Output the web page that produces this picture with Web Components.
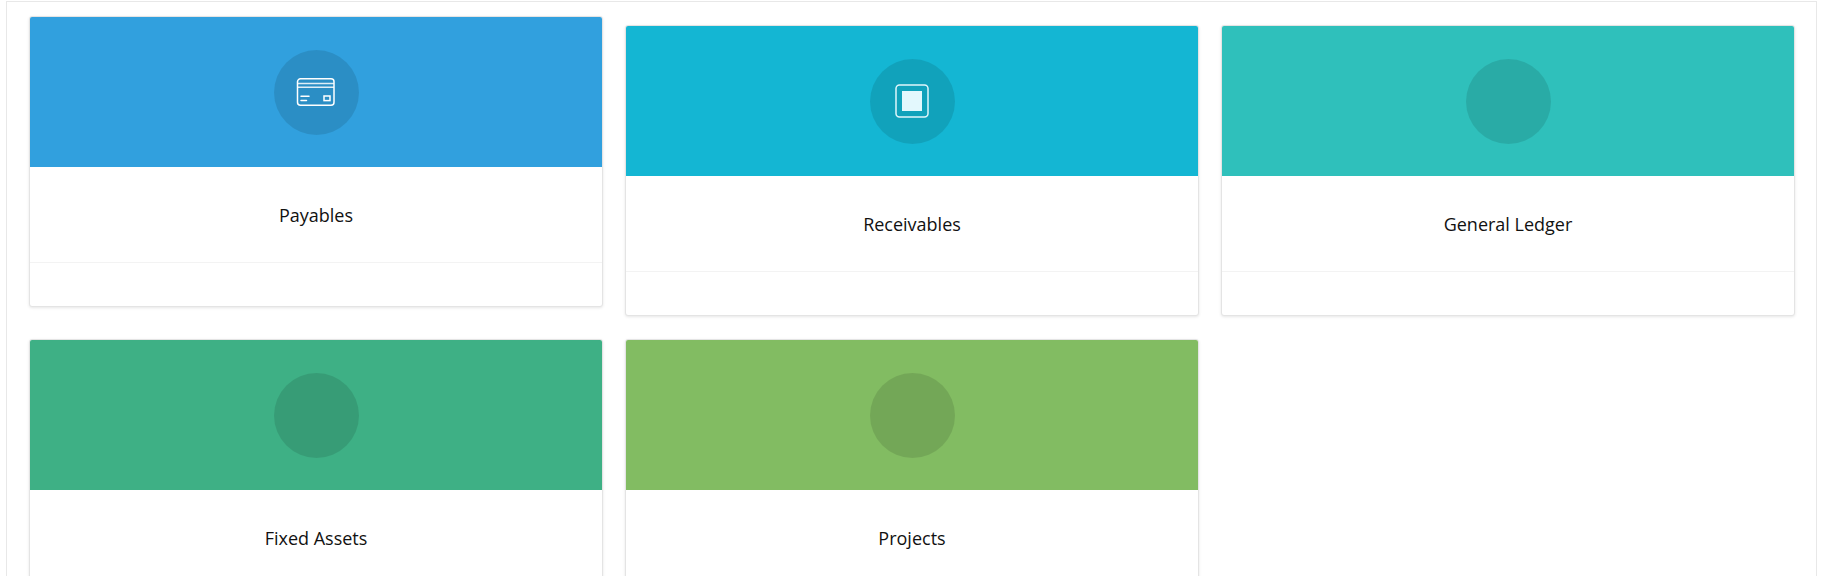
<!DOCTYPE html>
<html lang="en">
<head>
<meta charset="utf-8">
<title>Modules</title>
<style>
  html, body { margin: 0; height: 576px; overflow: hidden; background: #fff; }
</style>
</head>
<body>
<module-panel>
  <module-card color="#31a0de" label="Payables" style="margin-top:0">
    <svg slot="icon" width="40" height="30" viewBox="0 0 40 30" fill="none" stroke="#fff" stroke-width="1.5">
      <rect x="1.5" y="1.8" width="36.5" height="26.4" rx="3"/>
      <path d="M1.5 6.5H38M1.5 10.2H38" stroke-opacity=".85"/>
      <path d="M5 19.2H13M5 23.4H10.5" stroke-linecap="round"/>
      <rect x="28" y="19" width="6" height="4.6"/>
    </svg>
  </module-card>
  <module-card color="#14b6d3" label="Receivables" style="margin-top:9px">
    <svg slot="icon" width="34" height="34" viewBox="0 0 34 34" fill="none">
      <rect x="1" y="1" width="32" height="32" rx="3.5" stroke="#dff6fb" stroke-width="1.5"/>
      <rect x="7" y="7" width="20" height="20" fill="#e3f8fd"/>
    </svg>
  </module-card>
  <module-card color="#2fc0bb" label="General Ledger" style="margin-top:9px"></module-card>
  <module-card color="#3eb085" label="Fixed Assets"></module-card>
  <module-card color="#82bc62" label="Projects"></module-card>
</module-panel>

<script>
class ModulePanel extends HTMLElement {
  constructor() {
    super();
    this.attachShadow({ mode: "open" });
    this.shadowRoot.innerHTML = `
      <style>
        :host {
          display: block;
          box-sizing: border-box;
          width: 1811px;
          height: 700px;
          margin: 1px 0 0 6px;
          padding: 14px 22px 0 22px;
          background: #fff;
          border: 1px solid #e8e8e8;
        }
        .grid {
          display: grid;
          grid-template-columns: repeat(3, 574px);
          column-gap: 22px;
          row-gap: 23px;
          align-items: start;
        }
      </style>
      <div class="grid"><slot></slot></div>`;
  }
}

class ModuleCard extends HTMLElement {
  constructor() {
    super();
    this.attachShadow({ mode: "open" });
    this.shadowRoot.innerHTML = `
      <style>
        :host {
          display: block;
          box-sizing: border-box;
          height: 291px;
          background: #fff;
          border: 1px solid #e4e4e4;
          border-radius: 3px;
          box-shadow: 0 1px 3px rgba(0,0,0,.1);
          overflow: hidden;
          font-family: "Open Sans", "Noto Sans", sans-serif;
        }
        .head {
          height: 150px;
          display: flex;
          align-items: center;
          justify-content: center;
        }
        .circle {
          width: 85px;
          height: 85px;
          border-radius: 50%;
          background: rgba(0,0,0,.11);
          display: flex;
          align-items: center;
          justify-content: center;
        }
        .title {
          height: 96px;
          box-sizing: border-box;
          display: flex;
          align-items: center;
          justify-content: center;
          font-size: 18px;
          font-weight: 500;
          color: #111;
          border-bottom: 1px solid #f3f3f3;
        }
        .foot { height: 43px; }
      </style>
      <div class="head"><div class="circle"><slot name="icon"></slot></div></div>
      <div class="title"></div>
      <div class="foot"></div>`;
  }

  connectedCallback() {
    this.shadowRoot.querySelector(".head").style.background = this.getAttribute("color");
    this.shadowRoot.querySelector(".title").textContent = this.getAttribute("label");
  }
}

customElements.define("module-panel", ModulePanel);
customElements.define("module-card", ModuleCard);
</script>
</body>
</html>
